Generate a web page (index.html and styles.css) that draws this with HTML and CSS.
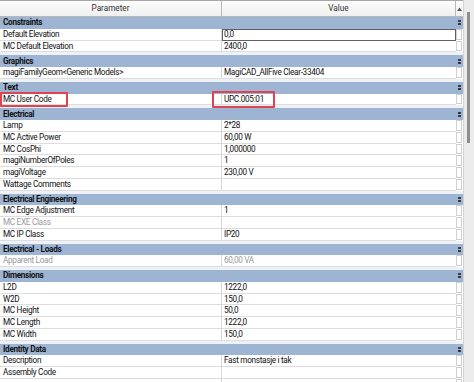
FILE: index.html
```html
<!DOCTYPE html>
<html lang="en">
<head>
    <meta charset="UTF-8">
    <title>Family Parameters</title>
    <link rel="stylesheet" href="styles.css">
</head>
<body>
<div class="sheet">
    <div class="head">
        <div class="h-param">Parameter</div>
        <div class="h-value">Value</div>
        <div class="h-btn">
            <svg width="5" height="4" viewBox="0 0 5 4"><path d="M0 4 L2.5 0.5 L5 4 Z" fill="#555"/></svg>
        </div>
    </div>

    <div class="group first">Constraints<i class="fold"></i></div>
    <div class="row"><div class="param">Default Elevation</div><div class="value edit">0,0</div><div class="btn"><span></span></div></div>
    <div class="row"><div class="param">MC Default Elevation</div><div class="value">2400,0</div><div class="btn"><span></span></div></div>

    <div class="group">Graphics<i class="fold"></i></div>
    <div class="row"><div class="param">magiFamilyGeom&lt;Generic Models&gt;</div><div class="value">MagiCAD_AllFive Clear-33404</div><div class="btn"><span></span></div></div>

    <div class="group">Text<i class="fold"></i></div>
    <div class="row"><div class="param">MC User Code</div><div class="value">UPC.005:01</div><div class="btn"><span></span></div></div>

    <div class="group">Electrical<i class="fold"></i></div>
    <div class="row"><div class="param">Lamp</div><div class="value">2*28</div><div class="btn"><span></span></div></div>
    <div class="row"><div class="param">MC Active Power</div><div class="value">60,00 W</div><div class="btn"><span></span></div></div>
    <div class="row"><div class="param">MC CosPhi</div><div class="value">1,000000</div><div class="btn"><span></span></div></div>
    <div class="row"><div class="param">magiNumberOfPoles</div><div class="value">1</div><div class="btn"><span></span></div></div>
    <div class="row"><div class="param">magiVoltage</div><div class="value">230,00 V</div><div class="btn"><span></span></div></div>
    <div class="row"><div class="param">Wattage Comments</div><div class="value"></div><div class="btn"><span></span></div></div>

    <div class="group">Electrical Engineering<i class="fold"></i></div>
    <div class="row"><div class="param">MC Edge Adjustment</div><div class="value">1</div><div class="btn"><span></span></div></div>
    <div class="row muted"><div class="param">MC EXE Class</div><div class="value"></div><div class="btn"><span></span></div></div>
    <div class="row"><div class="param">MC IP Class</div><div class="value">IP20</div><div class="btn"><span></span></div></div>

    <div class="group">Electrical - Loads<i class="fold"></i></div>
    <div class="row muted"><div class="param">Apparent Load</div><div class="value">60,00 VA</div><div class="btn"><span></span></div></div>

    <div class="group">Dimensions<i class="fold"></i></div>
    <div class="row"><div class="param">L2D</div><div class="value">1222,0</div><div class="btn"><span></span></div></div>
    <div class="row"><div class="param">W2D</div><div class="value">150,0</div><div class="btn"><span></span></div></div>
    <div class="row"><div class="param">MC Height</div><div class="value">50,0</div><div class="btn"><span></span></div></div>
    <div class="row"><div class="param">MC Length</div><div class="value">1222,0</div><div class="btn"><span></span></div></div>
    <div class="row"><div class="param">MC Width</div><div class="value">150,0</div><div class="btn"><span></span></div></div>

    <div class="group">Identity Data<i class="fold"></i></div>
    <div class="row"><div class="param">Description</div><div class="value">Fast monstasje i tak</div><div class="btn"><span></span></div></div>
    <div class="row"><div class="param">Assembly Code</div><div class="value"></div><div class="btn"><span></span></div></div>
    <div class="row"><div class="param"></div><div class="value"></div><div class="btn"><span></span></div></div>

    <!-- red highlight marks -->
    <div class="mark mark-param"></div>
    <div class="mark mark-value"></div>
</div>
<div class="scroll">
    <div class="thumb"></div>
</div>
</body>
</html>
```

FILE: styles.css
```css
*{
    margin: 0;
    padding: 0;
    box-sizing: border-box;
}
html, body{
    background: #fff;
}
body{
    width: 474px;
    height: 382px;
    overflow: hidden;
    display: flex;
    font: 8.2px/11px Roboto, "Liberation Sans", sans-serif;
    letter-spacing: -0.3px;
    color: #111;
}
.sheet{
    width: 463px;
    position: relative;
    background: #eef1f6;
}

/* header */
.head{
    display: grid;
    grid-template-columns: 222px 234px 7px;
    height: 17px;
    background: linear-gradient(#fdfdfd, #efefef);
    border-top: 1px solid #a8a8a8;
    border-bottom: 1px solid #b8b8b8;
    color: #333;
    letter-spacing: 0;
}
.head > div{
    display: flex;
    align-items: center;
    justify-content: center;
    border-right: 1px solid #b8b8b8;
}
.head .h-btn{
    border-right: none;
}

/* group bands */
.group{
    height: 11.75px;
    margin-top: 3px;
    padding-left: 3px;
    background: #9db5d3;
    font-weight: bold;
    color: #111;
    display: flex;
    align-items: center;
    justify-content: space-between;
}
.group.first{
    margin-top: 0;
}
.group .fold{
    width: 3px;
    height: 5px;
    margin-right: 2px;
    border-top: 2px solid #3a3a3a;
    border-bottom: 2px solid #3a3a3a;
}

/* data rows */
.row{
    display: grid;
    grid-template-columns: 222px 234px 7px;
    height: 11.75px;
    background: #fff;
}
.row > div{
    border-bottom: 1px solid #dddddd;
    white-space: nowrap;
    overflow: hidden;
}
.row .param{
    padding-left: 3px;
    border-right: 1px solid #d6d6d6;
}
.row .value{
    padding-left: 2px;
}
.row .value.edit{
    border: 1px solid #606060;
    padding-left: 1px;
    line-height: 9px;
}
.row .btn{
    border-bottom: none;
    padding: 0 1px 1px 0;
}
.row .btn span{
    display: block;
    height: 100%;
    background: #fff;
    border: 1px solid #cfcfcf;
}
.row.muted{
    color: #9a9a9a;
}

/* highlight marks */
.mark{
    position: absolute;
    border: 2px solid #e0424f;
    border-radius: 1px;
}
.mark-param{
    left: 0;
    top: 92px;
    width: 68px;
    height: 15px;
}
.mark-value{
    left: 212px;
    top: 91px;
    width: 63px;
    height: 17px;
}

/* scrollbar */
.scroll{
    flex: 1;
    background: #ebebeb;
    border-left: 1px solid #d4d4d4;
    padding: 12px 0 0 3px;
}
.scroll .thumb{
    width: 3px;
    height: 131px;
    background: #8d8d8d;
}
```
